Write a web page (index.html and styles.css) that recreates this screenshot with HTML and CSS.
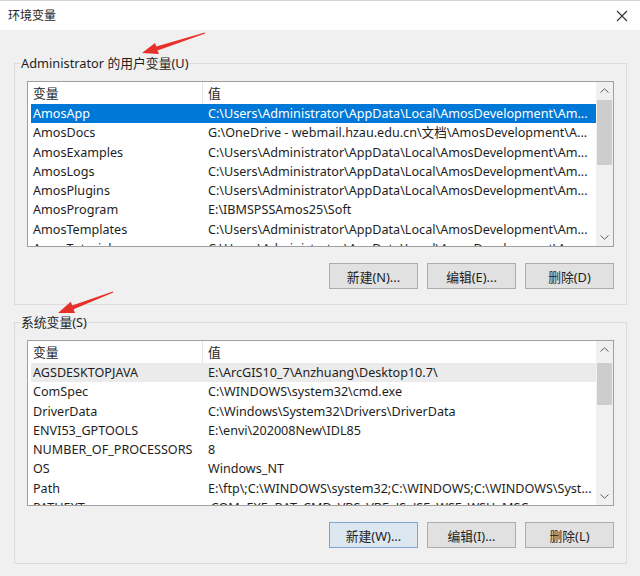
FILE: index.html
```html
<!doctype html>
<html lang="zh-CN">
  <head>
    <meta charset="UTF-8" />
    <meta name="viewport" content="width=device-width, initial-scale=1.0" />
    <title>环境变量</title>
    <link rel="stylesheet" href="styles.css">
  </head>
  <body>
    <div class="titlebar">
      <span class="title">环境变量</span>
      <svg class="close" width="12" height="12" viewBox="0 0 12 12">
        <path d="M1 1 L11 11 M11 1 L1 11" stroke="#333" stroke-width="1.1" fill="none" />
      </svg>
    </div>

    <fieldset class="group">
      <legend>Administrator 的用户变量(U)</legend>
      <div class="list">
        <div class="list-body">
          <div class="list-head">
            <div class="head-cell">变量</div>
            <div class="head-cell">值</div>
          </div>
          <div class="row selected"><span>AmosApp</span><span>C:\Users\Administrator\AppData\Local\AmosDevelopment\Am...</span></div>
          <div class="row"><span>AmosDocs</span><span>G:\OneDrive - webmail.hzau.edu.cn\文档\AmosDevelopment\A...</span></div>
          <div class="row"><span>AmosExamples</span><span>C:\Users\Administrator\AppData\Local\AmosDevelopment\Am...</span></div>
          <div class="row"><span>AmosLogs</span><span>C:\Users\Administrator\AppData\Local\AmosDevelopment\Am...</span></div>
          <div class="row"><span>AmosPlugins</span><span>C:\Users\Administrator\AppData\Local\AmosDevelopment\Am...</span></div>
          <div class="row"><span>AmosProgram</span><span>E:\IBMSPSSAmos25\Soft</span></div>
          <div class="row"><span>AmosTemplates</span><span>C:\Users\Administrator\AppData\Local\AmosDevelopment\Am...</span></div>
          <div class="row"><span>AmosTutorial</span><span>C:\Users\Administrator\AppData\Local\AmosDevelopment\A...</span></div>
        </div>
        <div class="scrollbar">
          <div class="arrow">
            <svg width="9" height="5" viewBox="0 0 9 5"><path d="M0.5 4.5 L4.5 0.8 L8.5 4.5" stroke="#606060" fill="none" /></svg>
          </div>
          <div class="track">
            <div class="thumb thumb-user"></div>
          </div>
          <div class="arrow">
            <svg width="9" height="5" viewBox="0 0 9 5"><path d="M0.5 0.5 L4.5 4.2 L8.5 0.5" stroke="#606060" fill="none" /></svg>
          </div>
        </div>
      </div>
      <div class="actions">
        <button class="btn">新建(N)...</button>
        <button class="btn">编辑(E)...</button>
        <button class="btn">删除(D)</button>
      </div>
    </fieldset>

    <fieldset class="group group-system">
      <legend>系统变量(S)</legend>
      <div class="list">
        <div class="list-body">
          <div class="list-head">
            <div class="head-cell">变量</div>
            <div class="head-cell">值</div>
          </div>
          <div class="row inactive"><span>AGSDESKTOPJAVA</span><span>E:\ArcGIS10_7\Anzhuang\Desktop10.7\</span></div>
          <div class="row"><span>ComSpec</span><span>C:\WINDOWS\system32\cmd.exe</span></div>
          <div class="row"><span>DriverData</span><span>C:\Windows\System32\Drivers\DriverData</span></div>
          <div class="row"><span>ENVI53_GPTOOLS</span><span>E:\envi\202008New\IDL85</span></div>
          <div class="row"><span>NUMBER_OF_PROCESSORS</span><span>8</span></div>
          <div class="row"><span>OS</span><span>Windows_NT</span></div>
          <div class="row"><span>Path</span><span>E:\ftp\;C:\WINDOWS\system32;C:\WINDOWS;C:\WINDOWS\Syst...</span></div>
          <div class="row"><span>PATHEXT</span><span>.COM;.EXE;.BAT;.CMD;.VBS;.VBE;.JS;.JSE;.WSF;.WSH;.MSC</span></div>
        </div>
        <div class="scrollbar">
          <div class="arrow">
            <svg width="9" height="5" viewBox="0 0 9 5"><path d="M0.5 4.5 L4.5 0.8 L8.5 4.5" stroke="#606060" fill="none" /></svg>
          </div>
          <div class="track">
            <div class="thumb thumb-system"></div>
          </div>
          <div class="arrow">
            <svg width="9" height="5" viewBox="0 0 9 5"><path d="M0.5 0.5 L4.5 4.2 L8.5 0.5" stroke="#606060" fill="none" /></svg>
          </div>
        </div>
      </div>
      <div class="actions">
        <button class="btn focused">新建(W)...</button>
        <button class="btn">编辑(I)...</button>
        <button class="btn">删除(L)</button>
      </div>
    </fieldset>

    <!-- red annotation arrows drawn over the dialog -->
    <svg class="marks" width="640" height="576" viewBox="0 0 640 576">
      <polygon fill="#e8302a" points="142,53 155,43 156.3,46.6 204.8,32.5 205.2,33.5 157.5,50.4 159,54" />
      <polygon fill="#e8302a" points="58,313 70.8,301.7 72.2,305.4 112.8,291.5 113.2,292.5 73.6,309.2 75,312.9" />
    </svg>
  </body>
</html>
```

FILE: styles.css
```css
* {
  margin: 0;
  padding: 0;
  box-sizing: border-box;
}

body {
  font-family: "Noto Sans", "Noto Sans CJK SC", sans-serif;
  font-size: 12.8px;
  color: #1e1e1e;
  background: #f0f0f0;
  width: 640px;
  height: 576px;
  overflow: hidden;
  position: relative;
}

.titlebar {
  height: 30px;
  background: #fff;
  border-top: 1px solid #d4d4d4;
  display: flex;
  align-items: center;
  justify-content: space-between;
  padding: 0 12px 0 8px;
}

.title {
  font-size: 12px;
  line-height: 18px;
}

.close {
  display: block;
}

.group {
  width: 613px;
  margin: 24px 0 0 14px;
  padding: 9px 12px 15px;
  border: 1px solid #dcdcdc;
  min-width: 0;
}

.group-system {
  margin-top: 8px;
}

.group legend {
  margin-left: -7px;
  padding: 0 1px;
  line-height: 18px;
}

.list {
  height: 166px;
  border: 1px solid #a0a0a0;
  background: #fff;
  display: flex;
}

.list-body {
  flex: 1;
  min-width: 0;
  overflow: hidden;
  padding-left: 3px;
}

.list-head {
  height: 22px;
  display: grid;
  grid-template-columns: 172px 1fr;
  align-items: center;
}

.head-cell {
  padding-left: 2px;
  line-height: 22px;
}

.head-cell:first-child {
  border-right: 1px solid #e5e5e5;
}

.head-cell + .head-cell {
  padding-left: 5px;
}

.row {
  height: 19.3px;
  line-height: 19.3px;
  font-size: 12.6px;
  display: grid;
  grid-template-columns: 175px 1fr;
  white-space: nowrap;
}

.row span {
  padding-left: 2px;
  overflow: hidden;
}

.row.selected {
  background: #0078d7;
  color: #fff;
}

.row.inactive {
  background: #ebebeb;
}

.scrollbar {
  width: 17px;
  background: #f0f0f0;
  display: flex;
  flex-direction: column;
}

.arrow {
  height: 17px;
  display: flex;
  align-items: center;
  justify-content: center;
}

.track {
  flex: 1;
  padding: 1px 1px 0;
}

.thumb {
  background: #cdcdcd;
}

.thumb-user {
  height: 65px;
}

.thumb-system {
  height: 42px;
  margin-top: 4px;
}

.actions {
  display: flex;
  justify-content: flex-end;
  gap: 9px;
  margin-top: 16px;
}

.btn {
  width: 89px;
  height: 26px;
  font-family: inherit;
  font-size: 12.8px;
  color: #1e1e1e;
  background: #e1e1e1;
  border: 1px solid #adadad;
}

.btn.focused {
  background: #dde7f0;
  border-color: #7aa6d2;
}

.marks {
  position: absolute;
  left: 0;
  top: 0;
  pointer-events: none;
}
```
